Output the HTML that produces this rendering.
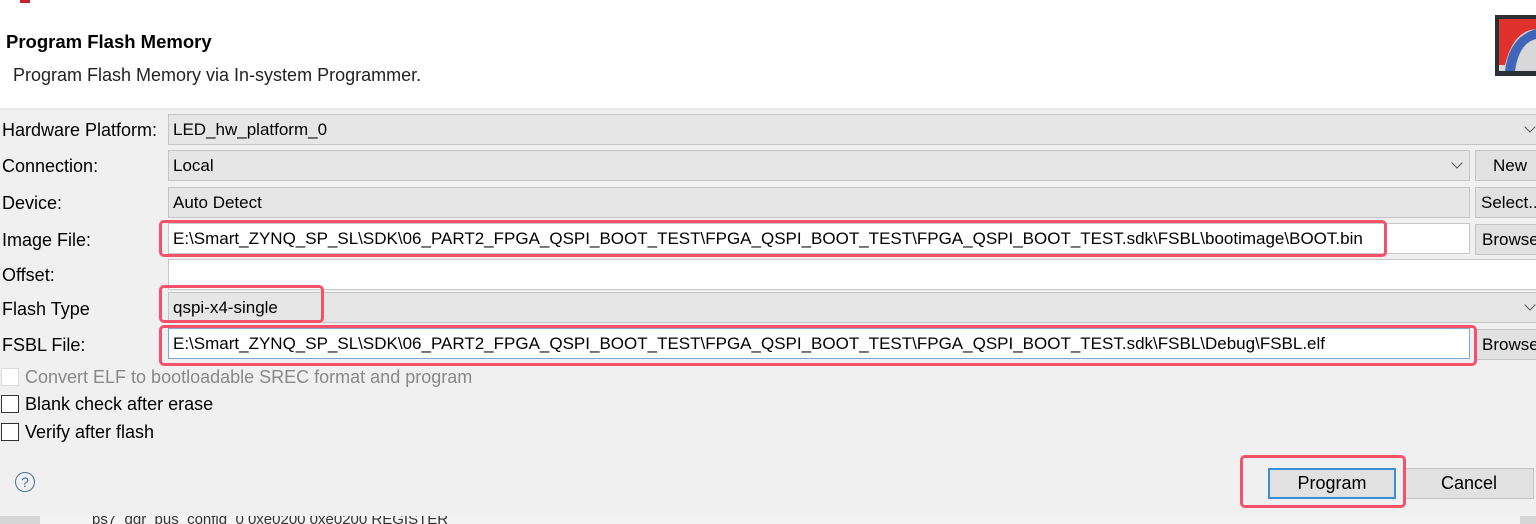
<!DOCTYPE html>
<html><head><meta charset="utf-8"><style>
*{box-sizing:border-box;margin:0;padding:0}
body{width:1536px;height:524px;overflow:hidden;background:#f0f0f0;font-family:"Liberation Sans","Noto Sans CJK SC",sans-serif;font-size:17px;color:#000;position:relative}
.abs{position:absolute}
.hdr{left:0;top:0;width:1536px;height:108px;background:#fff}
.lbl{left:2px;line-height:20px;font-size:18px}
.f{position:absolute;height:31px;border:1px solid #c8c8c8;background:#fff;padding-left:4px;line-height:29px;white-space:nowrap;overflow:hidden}
.g{background:#e6e6e6;border-color:#c4c4c4}
.btn{position:absolute;height:31px;border:1px solid #c4c4c4;background:#e1e1e1;line-height:29px;padding-left:8px;white-space:nowrap;overflow:hidden}
.red{position:absolute;border:3px solid #f5526a;border-radius:5px}
.chev{position:absolute;width:8px;height:8px;border-right:1.3px solid #555;border-bottom:1.3px solid #555;transform:rotate(45deg)}
.cb{position:absolute;left:1px;width:18px;height:18px;border:1px solid #333;background:#fff}
.ct{position:absolute;left:25px;font-size:18px}
</style></head><body>
<div class="abs hdr"></div>
<div class="abs" style="left:20px;top:0;width:10px;height:3px;background:#c8232c"></div>
<div class="abs" style="left:6px;top:31px;font-weight:bold;font-size:18.5px">Program Flash Memory</div>
<div class="abs" style="left:13px;top:65px;font-size:18px;color:#222">Program Flash Memory via In-system Programmer.</div>
<svg class="abs" style="left:1495px;top:15px" width="41" height="61" viewBox="0 0 41 61">
<rect x="0" y="0" width="41" height="61" fill="#2b2f36"/>
<rect x="4" y="4" width="37" height="52" fill="#d8d8d8"/>
<path d="M4 4 H41 V14 Q18 16 10 50 H4Z" fill="#e0312c"/>
<path d="M10 56 Q14 22 41 14 V24 Q24 28 20 56Z" fill="#3f66b8"/>
</svg>
<div class="abs" style="left:0;top:108px;width:1536px;height:2px;background:#e8e8e8"></div>

<div class="abs lbl" style="top:120px">Hardware Platform:</div>
<div class="f g" style="left:168px;top:114px;width:1380px">LED_hw_platform_0</div>
<div class="chev" style="left:1526px;top:123px"></div>

<div class="abs lbl" style="top:156px">Connection:</div>
<div class="f g" style="left:168px;top:150px;width:1302px">Local</div>
<div class="chev" style="left:1453px;top:159px"></div>
<div class="btn" style="left:1475px;top:150px;width:70px;padding-left:17px">New</div>

<div class="abs lbl" style="top:193px">Device:</div>
<div class="f g" style="left:168px;top:187px;width:1302px">Auto Detect</div>
<div class="btn" style="left:1475px;top:187px;width:70px;padding-left:5px">Select...</div>

<div class="abs lbl" style="top:230px">Image File:</div>
<div class="f" style="left:168px;top:223px;width:1302px">E:\Smart_ZYNQ_SP_SL\SDK\06_PART2_FPGA_QSPI_BOOT_TEST\FPGA_QSPI_BOOT_TEST\FPGA_QSPI_BOOT_TEST.sdk\FSBL\bootimage\BOOT.bin</div>
<div class="btn" style="left:1475px;top:224px;width:70px;padding-left:6px">Browse...</div>

<div class="abs lbl" style="top:265px">Offset:</div>
<div class="f" style="left:168px;top:259px;width:1380px"></div>

<div class="abs lbl" style="top:299px">Flash Type</div>
<div class="f g" style="left:168px;top:292px;width:1380px">qspi-x4-single</div>
<div class="chev" style="left:1526px;top:301px"></div>

<div class="abs lbl" style="top:335px">FSBL File:</div>
<div class="f" style="left:168px;top:328px;width:1302px;border-color:#7aa7d6">E:\Smart_ZYNQ_SP_SL\SDK\06_PART2_FPGA_QSPI_BOOT_TEST\FPGA_QSPI_BOOT_TEST\FPGA_QSPI_BOOT_TEST.sdk\FSBL\Debug\FSBL.elf</div>
<div class="btn" style="left:1475px;top:329px;width:70px;padding-left:6px">Browse...</div>

<div class="cb" style="top:368px;border-color:#ddd"></div>
<div class="ct" style="top:367px;color:#888">Convert ELF to bootloadable SREC format and program</div>
<div class="cb" style="top:395px"></div>
<div class="ct" style="top:394px">Blank check after erase</div>
<div class="cb" style="top:423px"></div>
<div class="ct" style="top:422px">Verify after flash</div>

<div class="abs" style="left:15px;top:472px;width:20px;height:20px;border:1.3px solid #4a6fa5;border-radius:50%;text-align:center;line-height:18px;font-size:14px;color:#4a6fa5">?</div>

<div class="btn" style="left:1268px;top:468px;width:128px;border:2px solid #3c8fd6;padding-left:0;text-align:center;line-height:27px;font-size:18px">Program</div>
<div class="btn" style="left:1404px;top:468px;width:130px;padding-left:0;text-align:center;font-size:18px">Cancel</div>

<div class="abs" style="left:0;top:516px;width:1536px;height:8px;background:#d6d6d6;overflow:hidden"><div style="position:absolute;left:40px;top:0;width:1480px;height:8px;background:#f4f4f4"></div><div style="position:absolute;left:92px;top:-5px;font-size:15px;color:#333">ps7_ddr_bus_config_0 0xe0200 0xe0200 REGISTER</div></div>

<div class="red" style="left:159px;top:220px;width:1228px;height:37px"></div>
<div class="red" style="left:159px;top:285px;width:165px;height:38px"></div>
<div class="red" style="left:159px;top:325px;width:1318px;height:41px"></div>
<div class="red" style="left:1240px;top:455px;width:166px;height:53px"></div>
</body></html>
